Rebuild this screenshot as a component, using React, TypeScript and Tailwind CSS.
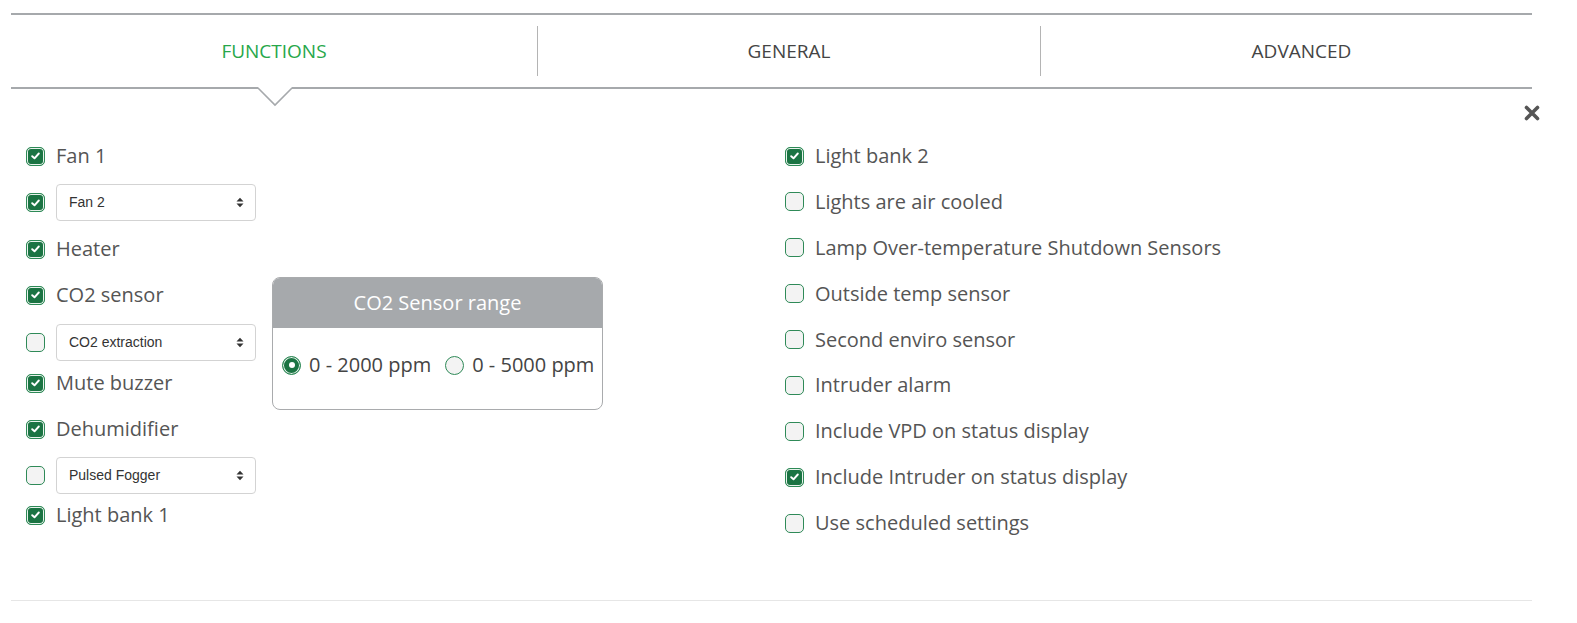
import React from "react";

const font = { fontFamily: '"Open Sans", "Liberation Sans", sans-serif' };

function Check({ on }: { on: boolean }) {
  if (on) {
    return (
      <span className="flex h-[19px] w-[19px] shrink-0 items-center justify-center rounded-[5px] border border-[#2e8a57] bg-[#1b7443] shadow-[inset_0_0_0_1px_#e8f3ec]">
        <svg width="9" height="8" viewBox="0 0 9 8">
          <path d="M1.2 4.2 L3.5 6.3 L7.8 1.5" fill="none" stroke="#fff" strokeWidth="1.9" strokeLinecap="round" strokeLinejoin="round" />
        </svg>
      </span>
    );
  }
  return <span className="h-[19px] w-[19px] shrink-0 rounded-[5px] border-[1.5px] border-[#2f8a58] bg-[#f3f3f3]" />;
}

function Row({ on, label, mt }: { on: boolean; label: string; mt: string }) {
  return (
    <div className={`flex h-[28px] items-center gap-[11px] ${mt}`}>
      <Check on={on} />
      <span className="text-[20px] text-[#555] leading-none whitespace-nowrap">{label}</span>
    </div>
  );
}

function SelectRow({ on, label, mt }: { on: boolean; label: string; mt: string }) {
  return (
    <div className={`flex h-[37px] items-center gap-[11px] ${mt}`}>
      <Check on={on} />
      <div
        className="flex h-[37px] w-[200px] items-center justify-between rounded-[4px] border border-[#d3d3d3] bg-white pl-[12px] pr-[11px] text-[14px] text-[#333]"
        style={{ fontFamily: '"Liberation Sans", Arial, sans-serif' }}
      >
        <span>{label}</span>
        <svg width="8" height="11" viewBox="0 0 8 11">
          <path d="M0.5 4.5 L4 0.8 L7.5 4.5 Z M0.5 6.5 L4 10.2 L7.5 6.5 Z" fill="#333" />
        </svg>
      </div>
    </div>
  );
}

function Radio({ on }: { on: boolean }) {
  if (on) {
    return (
      <span className="flex h-[19px] w-[19px] shrink-0 items-center justify-center rounded-full border border-[#2e8a57] bg-[#1b7443] shadow-[inset_0_0_0_1px_#e8f3ec]">
        <span className="h-[6px] w-[6px] rounded-full bg-white" />
      </span>
    );
  }
  return <span className="h-[19px] w-[19px] shrink-0 rounded-full border-[1.5px] border-[#2f8a58] bg-[#f3f3f3]" />;
}

const rightItems: [boolean, string][] = [
  [true, "Light bank 2"],
  [false, "Lights are air cooled"],
  [false, "Lamp Over-temperature Shutdown Sensors"],
  [false, "Outside temp sensor"],
  [false, "Second enviro sensor"],
  [false, "Intruder alarm"],
  [false, "Include VPD on status display"],
  [true, "Include Intruder on status display"],
  [false, "Use scheduled settings"],
];

export default function App() {
  return (
    <div className="h-[623px] w-full overflow-hidden bg-white" style={font}>
      <div className="pt-[13px] pl-[11px]">
        <div className="relative w-[1521px]">
          <div className="h-[2px] bg-[#a6a9ac]" />
          <div className="flex h-[72px] w-[1551px] items-center text-[19px]">
            <div className="flex w-[526px] shrink-0 justify-center text-[#27a74a]">FUNCTIONS</div>
            <div className="h-[50px] w-px shrink-0 bg-[#b4b4b4]" />
            <div className="flex w-[502px] shrink-0 justify-center text-[#444]">GENERAL</div>
            <div className="h-[50px] w-px shrink-0 bg-[#b4b4b4]" />
            <div className="flex w-[521px] shrink-0 justify-center text-[#444]">ADVANCED</div>
          </div>
          <div className="h-[2px] bg-[#a6a9ac]" />
          <svg className="absolute left-[245px] top-[74px]" width="38" height="20" viewBox="0 0 38 20">
            <path d="M0 1 L2 1 L19 18 L36 1 L38 1" fill="white" stroke="#a6a9ac" strokeWidth="1.6" />
            <rect x="2.5" y="0" width="33" height="1" fill="white" />
          </svg>
        </div>
      </div>

      <div className="flex w-[1577px] justify-end pr-[37px] pt-[16px]">
        <svg width="16" height="16" viewBox="0 0 16 16">
          <path d="M2.5 2.5 L13.5 13.5 M13.5 2.5 L2.5 13.5" stroke="#555" strokeWidth="3.6" strokeLinecap="round" />
        </svg>
      </div>

      <div className="flex pl-[26px] pt-[16px]">
        <div className="flex w-[759px] shrink-0 items-start">
          <div className="flex flex-col pt-[5px]">
            <Row on label="Fan 1" mt="mt-0" />
            <SelectRow on label="Fan 2" mt="mt-[14px]" />
            <Row on label="Heater" mt="mt-[14px]" />
            <Row on label="CO2 sensor" mt="mt-[18px]" />
            <SelectRow on={false} label="CO2 extraction" mt="mt-[15px]" />
            <Row on label="Mute buzzer" mt="mt-[8px]" />
            <Row on label="Dehumidifier" mt="mt-[18px]" />
            <SelectRow on={false} label="Pulsed Fogger" mt="mt-[14px]" />
            <Row on label="Light bank 1" mt="mt-[7px]" />
          </div>
          <div className="ml-[16px] mt-[140px] w-[331px] shrink-0 overflow-hidden rounded-[8px] border border-[#a9abad]">
            <div className="flex h-[50px] items-center justify-center bg-[#a6a9ac] text-[20px] text-white">
              CO2 Sensor range
            </div>
            <div className="flex h-[81px] items-start pl-[9px] pt-[27px] text-[20px] text-[#444]">
              <div className="flex items-center gap-[8px]">
                <Radio on />
                <span className="leading-none whitespace-nowrap">0 - 2000 ppm</span>
              </div>
              <div className="ml-[14px] flex items-center gap-[8px]">
                <Radio on={false} />
                <span className="leading-none whitespace-nowrap">0 - 5000 ppm</span>
              </div>
            </div>
          </div>
        </div>
        <div className="flex flex-col gap-[17.9px] pt-[5px]">
          {rightItems.map(([on, label]) => (
            <div key={label} className="flex h-[28px] items-center gap-[11px]">
              <Check on={on} />
              <span className="text-[20px] text-[#555] leading-none whitespace-nowrap">{label}</span>
            </div>
          ))}
        </div>
      </div>

      <div className="ml-[11px] mt-[63px] h-px w-[1521px] bg-[#e6e6e6]" />
    </div>
  );
}
